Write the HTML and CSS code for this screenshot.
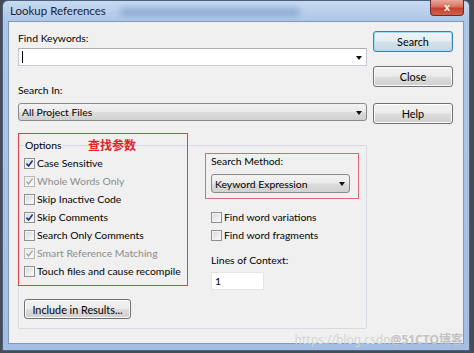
FILE: index.html
```html
<!DOCTYPE html>
<html lang="en">
<head>
  <meta charset="UTF-8" />
  <title>Lookup References</title>
  <link rel="stylesheet" href="styles.css">
</head>
<body>
  <div class="window">
    <div class="titlebar">
      <span class="title">Lookup References</span>
      <span class="title-smudge"></span>
      <span class="close-x">x</span>
    </div>
    <div class="client">
      <div class="main">
        <div class="lbl">Find Keywords:</div>
        <div class="combo edit"><span class="caret"></span><span class="arrow"></span></div>
        <div class="lbl search-in">Search In:</div>
        <div class="combo list"><span>All Project Files</span><span class="arrow"></span></div>

        <fieldset class="group">
          <legend>Options</legend>
          <div class="cols">
            <div class="col-left">
              <div class="row"><span class="box checked"></span>Case Sensitive</div>
              <div class="row off"><span class="box checked"></span>Whole Words Only</div>
              <div class="row"><span class="box"></span>Skip Inactive Code</div>
              <div class="row"><span class="box checked"></span>Skip Comments</div>
              <div class="row"><span class="box"></span>Search Only Comments</div>
              <div class="row off"><span class="box checked"></span>Smart Reference Matching</div>
              <div class="row"><span class="box"></span>Touch files and cause recompile</div>
            </div>
            <div class="col-right">
              <div class="lbl">Search Method:</div>
              <div class="combo list method"><span>Keyword Expression</span><span class="arrow"></span></div>
              <div class="row first"><span class="box"></span>Find word variations</div>
              <div class="row"><span class="box"></span>Find word fragments</div>
              <div class="lbl context">Lines of Context:</div>
              <div class="num">1</div>
            </div>
          </div>
          <button class="btn include">Include in Results...</button>
        </fieldset>

        <!-- red annotations drawn over the dialog -->
        <div class="mark mark-options"></div>
        <div class="mark mark-method"></div>
        <span class="note">查找参数</span>
      </div>
      <div class="side">
        <button class="btn default">Search</button>
        <button class="btn close">Close</button>
        <button class="btn help">Help</button>
      </div>
    </div>
    <div class="watermark"><span class="wm-url">https://blog.csdn</span><span class="wm-site">@51CTO博客</span></div>
  </div>
</body>
</html>
```

FILE: styles.css
```css
* {
  box-sizing: border-box;
}
body {
  margin: 0;
  background: #464c55;
  font-family: Lato, "Noto Sans", "Noto Sans CJK SC", sans-serif;
  font-size: 10.4px;
  color: #000;
}
.window {
  position: relative;
  width: 468px;
  height: 351px;
  margin-left: 2px;
  border: 1px solid #4d607c;
  border-radius: 6px 6px 0 0;
  background: linear-gradient(180deg, #c6daf1 0, #adc6e7 20px, #a4bfe3 100%);
  padding: 0 5px 6px;
  display: flex;
  flex-direction: column;
}
.titlebar {
  height: 20px;
  display: flex;
  align-items: flex-start;
}
.title {
  padding: 3px 0 0 2px;
  font-size: 11.5px;
  color: #1c2433;
}
.title-smudge {
  width: 180px;
  height: 8px;
  margin: 7px 0 0 14px;
  background: #7c9bc8;
  border-radius: 4px;
  filter: blur(3px);
  opacity: 0.7;
}
.close-x {
  margin-left: auto;
  margin-top: -1px;
  width: 34px;
  height: 16px;
  border: 1px solid #6e2a24;
  border-top: none;
  border-radius: 0 0 4px 4px;
  background: linear-gradient(180deg, #e9a99c 0, #d7705f 45%, #c4422f 55%, #d1624c 100%);
  color: #fff;
  font-weight: bold;
  font-size: 11px;
  text-align: center;
  line-height: 14px;
}
.client {
  flex: 1;
  display: flex;
  gap: 6px;
  padding: 9px 9px 0 9px;
  background: #f0f0f0;
  border: 1px solid #8299ba;
}
.main {
  position: relative;
  width: 349px;
}
.side {
  width: 80px;
  display: flex;
  flex-direction: column;
}
.lbl {
  line-height: 14px;
}
.search-in {
  margin-top: 17px;
}
.combo {
  position: relative;
  height: 18px;
  display: flex;
  align-items: center;
  padding-left: 3px;
}
.combo.edit {
  margin-top: 3px;
  background: #fff;
  border: 1px solid #c5cad2;
  border-top-color: #abadb3;
}
.caret {
  width: 1px;
  height: 12px;
  background: #000;
}
.combo.list {
  margin-top: 6px;
  border: 1px solid #8a8a8a;
  border-radius: 3px;
  background: linear-gradient(180deg, #f3f3f3 0, #ebebeb 48%, #dddddd 52%, #d0d0d0 100%);
}
.combo.method {
  width: 139px;
  height: 19px;
}
.arrow {
  position: absolute;
  right: 4px;
  top: 7px;
  border-left: 3px solid transparent;
  border-right: 3px solid transparent;
  border-top: 4px solid #111;
}
.group {
  margin: 17px 0 0;
  padding: 2px 5px 9px;
  border: 1px solid #d5dbe2;
  border-radius: 2px;
  min-width: 0;
}
.group legend {
  padding: 0 1px;
  line-height: 14px;
}
.cols {
  display: flex;
}
.col-left {
  width: 187px;
}
.col-right {
  width: 150px;
}
.row {
  height: 18px;
  display: flex;
  align-items: center;
  gap: 2px;
}
.row.off {
  color: #8d8d8d;
}
.row.first {
  margin-top: 15px;
}
.box {
  width: 11px;
  height: 11px;
  border: 1px solid #8e8f8f;
  background: linear-gradient(135deg, #d6d8db, #fbfbfb);
  box-shadow: inset 0 0 0 1px #f4f4f4;
  background-repeat: no-repeat;
  background-position: center;
}
.box.checked {
  background-image: url("data:image/svg+xml;utf8,<svg xmlns='http://www.w3.org/2000/svg' width='9' height='9' viewBox='0 0 9 9'><path d='M1.5 4.6 L3.6 7 L7.6 1.6' fill='none' stroke='%231d3870' stroke-width='1.6'/></svg>"), linear-gradient(135deg, #d6d8db, #fbfbfb);
}
.row.off .box {
  border-color: #b7b7b7;
}
.row.off .box.checked {
  background-image: url("data:image/svg+xml;utf8,<svg xmlns='http://www.w3.org/2000/svg' width='9' height='9' viewBox='0 0 9 9'><path d='M1.5 4.6 L3.6 7 L7.6 1.6' fill='none' stroke='%23a3a3a3' stroke-width='1.4'/></svg>"), linear-gradient(135deg, #e6e6e6, #fbfbfb);
}
.context {
  margin-top: 9px;
}
.num {
  width: 53px;
  height: 18px;
  margin-top: 5px;
  padding-left: 3px;
  line-height: 16px;
  background: #fff;
  border: 1px solid #e4e4e4;
}
.btn {
  display: block;
  font-family: inherit;
  font-size: 10.8px;
  color: #000;
  padding: 0;
  height: 21px;
  border: 1px solid #707070;
  border-radius: 3px;
  background: linear-gradient(180deg, #f2f2f2 0, #ebebeb 48%, #dddddd 52%, #cfcfcf 100%);
  box-shadow: inset 0 0 0 1px #fbfbfb;
}
.btn.default {
  border-color: #3c7fb1;
  box-shadow: inset 0 0 0 1px #9fdcf5;
  background: linear-gradient(180deg, #eef5f9 0, #e4eef4 48%, #d4e2ea 52%, #c7d8e2 100%);
}
.btn.close {
  margin-top: 14px;
}
.btn.help {
  margin-top: 16px;
}
.btn.include {
  margin-top: 9px;
  width: 107px;
  height: 20px;
}
.mark {
  position: absolute;
  border: 1px solid #e0404e;
}
.mark-options {
  left: 0;
  top: 102px;
  width: 170px;
  height: 153px;
}
.mark-method {
  left: 187px;
  top: 122px;
  width: 154px;
  height: 46px;
  border-color: #e0687a;
}
.note {
  position: absolute;
  left: 70px;
  top: 106px;
  font-family: "Noto Sans CJK SC", sans-serif;
  font-size: 12px;
  font-weight: bold;
  line-height: 16px;
  color: #e3232b;
}
.watermark {
  position: absolute;
  right: 6px;
  bottom: 3px;
  font-family: "Noto Sans", "Noto Sans CJK SC", sans-serif;
  font-size: 12px;
  line-height: 14px;
}
.wm-url {
  color: #d4d4d4;
}
.wm-site {
  color: #c3c3c3;
  font-weight: bold;
}
```
